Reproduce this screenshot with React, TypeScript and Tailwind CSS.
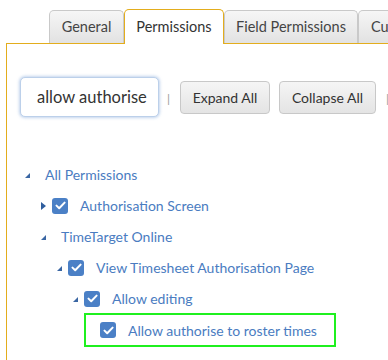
import type { ReactNode } from "react";

const font = { fontFamily: "Lato, 'Open Sans', sans-serif" };

function Tab({ label, width, active }: { label: string; width: string; active?: boolean }) {
  if (active) {
    return (
      <div
        className={`${width} relative z-10 -mb-px flex h-[35px] shrink-0 items-center justify-center rounded-t-[5px] border border-b-0 border-[#e3ad1d] bg-white text-[14.5px] text-[#333]`}
      >
        {label}
      </div>
    );
  }
  return (
    <div
      className={`${width} mt-px flex h-[33px] shrink-0 items-center justify-center overflow-hidden whitespace-nowrap rounded-t-[5px] border border-b-0 border-[#c9c9c9] bg-gradient-to-b from-[#f6f6f6] to-[#e2e2e2] text-[14.5px] text-[#444]`}
    >
      {label}
    </div>
  );
}

function Button({ children, width }: { children: ReactNode; width: string }) {
  return (
    <button
      className={`${width} flex h-[33px] shrink-0 items-center justify-center rounded-[4px] border border-[#c8c8c8] bg-gradient-to-b from-[#f5f5f5] to-[#e4e4e4] text-[14px] text-[#333]`}
    >
      {children}
    </button>
  );
}

function Separator() {
  return <span className="shrink-0 text-[12px] leading-none text-[#9a9a9a]">|</span>;
}

function Arrow({ open }: { open?: boolean }) {
  return open ? (
    <svg width="5" height="5" viewBox="0 0 5 5" className="mt-[1px]">
      <polygon points="5,0 5,5 0,5" fill="#3a66a3" />
    </svg>
  ) : (
    <svg width="5" height="8" viewBox="0 0 5 8">
      <polygon points="0,0 5,4 0,8" fill="#2f5e9e" />
    </svg>
  );
}

function Check() {
  return (
    <span className="flex h-[16px] w-[16px] shrink-0 items-center justify-center rounded-[3px] bg-[#4b80c6]">
      <svg width="11" height="9" viewBox="0 0 11 9" fill="none">
        <path d="M1.5 4.6 4.2 7.2 9.6 1.6" stroke="#fff" strokeWidth="2" strokeLinecap="round" strokeLinejoin="round" />
      </svg>
    </span>
  );
}

type Node = {
  label: string;
  level: number;
  arrow?: "open" | "closed";
  checked?: boolean;
  highlight?: boolean;
};

const nodes: Node[] = [
  { label: "All Permissions", level: 0, arrow: "open" },
  { label: "Authorisation Screen", level: 1, arrow: "closed", checked: true },
  { label: "TimeTarget Online", level: 1, arrow: "open" },
  { label: "View Timesheet Authorisation Page", level: 2, arrow: "open", checked: true },
  { label: "Allow editing", level: 3, arrow: "open", checked: true },
  { label: "Allow authorise to roster times", level: 4, checked: true, highlight: true },
];

const indent = ["ml-0", "ml-[16px]", "ml-[32px]", "ml-[48px]", "ml-[59px]"];

function TreeRow({ node }: { node: Node }) {
  const inner = (
    <>
      {node.arrow && (
        <span className="flex w-[11px] shrink-0 items-center">
          <Arrow open={node.arrow === "open"} />
        </span>
      )}
      {node.checked && <Check />}
      <span className={`${node.checked ? "ml-[12px]" : "ml-[9px]"} whitespace-nowrap`}>{node.label}</span>
    </>
  );
  if (node.highlight) {
    return (
      <div
        className={`${indent[node.level]} -mt-px flex h-[34px] w-[252px] items-center border-2 border-[#1ff01f] pl-[14px]`}
      >
        {inner}
      </div>
    );
  }
  return <div className={`${indent[node.level]} flex h-[31px] items-center`}>{inner}</div>;
}

export default function App() {
  return (
    <div className="h-[360px] w-[388px] overflow-hidden bg-white" style={font}>
      <div className="flex pl-[49px] pt-[9px]">
        <Tab label="General" width="w-[75px]" />
        <Tab label="Permissions" width="w-[100px]" active />
        <Tab label="Field Permissions" width="w-[134px]" />
        <Tab label="Custom" width="w-[80px] justify-start pl-[12px]" />
      </div>
      <div className="ml-[6px] h-[330px] w-[420px] border-l border-t border-[#e3ad1d]">
        <div className="flex items-center pl-[13px] pt-[33px]">
          <div className="flex h-[40px] w-[139px] shrink-0 items-center rounded-[5px] border border-[#bcd0ea] bg-white pl-[16px] text-[16.5px] text-[#333] shadow-[0_0_3px_1px_rgba(120,160,215,0.45)]">
            allow authorise
          </div>
          <span className="ml-[8px]">
            <Separator />
          </span>
          <span className="ml-[10px]">
            <Button width="w-[90px]">Expand All</Button>
          </span>
          <span className="ml-[9px]">
            <Button width="w-[97px]">Collapse All</Button>
          </span>
          <span className="ml-[10px]">
            <Separator />
          </span>
        </div>
        <div className="mt-[42px] pl-[18px] text-[14px] text-[#4a7cc1]">
          {nodes.map((n) => (
            <TreeRow key={n.label} node={n} />
          ))}
        </div>
      </div>
    </div>
  );
}
